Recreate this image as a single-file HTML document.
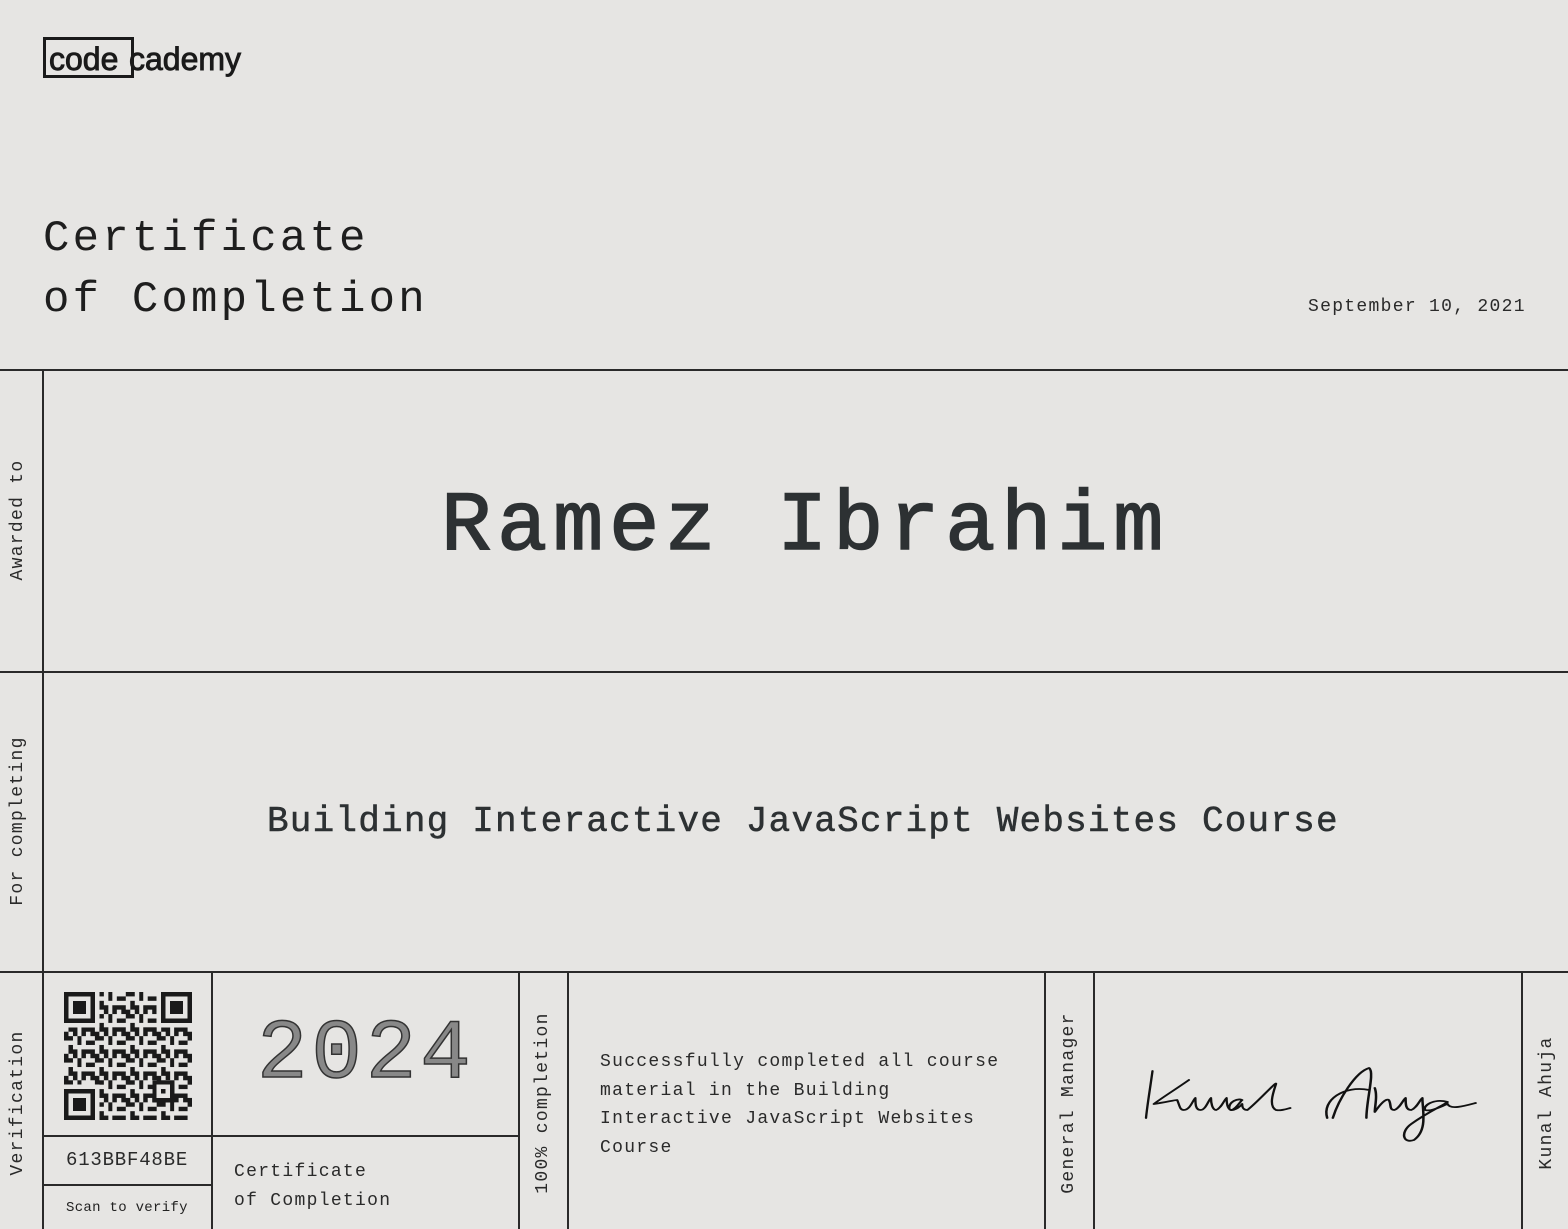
<!DOCTYPE html>
<html><head><meta charset="utf-8">
<style>
*{margin:0;padding:0;box-sizing:border-box}
html,body{width:1568px;height:1229px;overflow:hidden;background:#e6e5e3}
body{position:relative;font-family:"Liberation Mono",monospace;color:#222}
.a{position:absolute;white-space:nowrap}
.h{position:absolute;height:1.5px;background:#2a2a2a}
.v{position:absolute;width:1.5px;background:#2a2a2a}
.rot{position:absolute;white-space:nowrap;font-size:18px;letter-spacing:1.3px;color:#2a2a2a;transform:translate(-50%,-50%) rotate(-90deg)}
.s{font-size:18px;letter-spacing:1.3px;color:#2a2a2a}
</style></head><body>
<!-- logo -->
<div class="a" style="left:43px;top:37px;width:91px;height:41px;border:3px solid #1a1a1a"></div>
<div class="a" style="left:49px;top:41px;font-family:'Liberation Sans',sans-serif;font-size:32px;color:#1a1a1a;-webkit-text-stroke:0.9px #1a1a1a">code</div>
<div class="a" style="left:129px;top:41px;font-family:'Liberation Sans',sans-serif;font-size:32px;color:#1a1a1a;-webkit-text-stroke:0.9px #1a1a1a">cademy</div>

<div class="a" style="left:43px;top:209px;font-size:44px;letter-spacing:3.2px;line-height:61px;color:#1e1e1e">Certificate<br>of Completion</div>
<div class="a s" style="left:1308px;top:297px">September 10, 2021</div>

<!-- lines -->
<div class="h" style="left:0;top:369px;width:1568px"></div>
<div class="h" style="left:0;top:671px;width:1568px"></div>
<div class="h" style="left:0;top:971px;width:1568px"></div>
<div class="v" style="left:42px;top:369px;height:860px"></div>
<div class="v" style="left:211px;top:971px;height:258px"></div>
<div class="v" style="left:518px;top:971px;height:258px"></div>
<div class="v" style="left:567px;top:971px;height:258px"></div>
<div class="v" style="left:1044px;top:971px;height:258px"></div>
<div class="v" style="left:1093px;top:971px;height:258px"></div>
<div class="v" style="left:1521px;top:971px;height:258px"></div>
<div class="h" style="left:42px;top:1135px;width:477px"></div>
<div class="h" style="left:42px;top:1184px;width:170px"></div>

<div class="rot" style="left:18px;top:520px">Awarded to</div>
<div class="rot" style="left:18px;top:821px">For completing</div>
<div class="rot" style="left:18px;top:1103px">Verification</div>
<div class="rot" style="left:543px;top:1103px">100% completion</div>
<div class="rot" style="left:1069px;top:1103px">General Manager</div>
<div class="rot" style="left:1547px;top:1103px">Kunal Ahuja</div>

<div class="a" style="left:441px;top:480px;font-size:84px;letter-spacing:5.6px;color:#2d3133;-webkit-text-stroke:1.5px #2d3133">Ramez Ibrahim</div>
<div class="a" style="left:267px;top:801px;font-size:36px;letter-spacing:1.2px;color:#2d3133;-webkit-text-stroke:0.5px #2d3133">Building Interactive JavaScript Websites Course</div>

<!-- QR -->
<svg class="a" style="left:64px;top:992px" width="128" height="128" viewBox="0 0 29 29" shape-rendering="crispEdges">
<defs><pattern id="p" width="7" height="5" patternUnits="userSpaceOnUse">
<rect x="0" y="0" width="2" height="1" fill="#1a1a1a"/><rect x="3" y="0" width="1" height="2" fill="#1a1a1a"/><rect x="5" y="1" width="2" height="1" fill="#1a1a1a"/><rect x="1" y="2" width="1" height="2" fill="#1a1a1a"/><rect x="4" y="3" width="2" height="1" fill="#1a1a1a"/><rect x="0" y="4" width="1" height="1" fill="#1a1a1a"/><rect x="2" y="3" width="1" height="2" fill="#1a1a1a"/><rect x="6" y="3" width="1" height="2" fill="#1a1a1a"/><rect x="4" y="4" width="1" height="1" fill="#1a1a1a"/>
</pattern></defs>
<rect width="29" height="29" fill="url(#p)"/>
<rect x="0" y="0" width="8" height="8" fill="#e6e5e3"/><rect x="21" y="0" width="8" height="8" fill="#e6e5e3"/><rect x="0" y="21" width="8" height="8" fill="#e6e5e3"/>
<g fill="#1a1a1a">
<path d="M0 0h7v7h-7zM1 1v5h5v-5zM2 2h3v3h-3z" fill-rule="evenodd"/>
<path d="M22 0h7v7h-7zM23 1v5h5v-5zM24 2h3v3h-3z" fill-rule="evenodd"/>
<path d="M0 22h7v7h-7zM1 23v5h5v-5zM2 24h3v3h-3z" fill-rule="evenodd"/>
<rect x="20" y="20" width="5" height="5"/></g>
<rect x="21" y="21" width="3" height="3" fill="#e6e5e3"/><rect x="22" y="22" width="1" height="1" fill="#1a1a1a"/>
</svg>

<div class="a" style="left:257px;top:1008px;font-size:84px;letter-spacing:4px;color:#888;-webkit-text-stroke:1.5px #333">2024</div>
<div class="a s" style="left:66px;top:1149px;font-size:19px;letter-spacing:0.8px">613BBF48BE</div>
<div class="a" style="left:66px;top:1200px;font-size:14px;letter-spacing:0.3px">Scan to verify</div>
<div class="a s" style="left:234px;top:1158px;line-height:29px">Certificate<br>of Completion</div>
<div class="a s" style="left:600px;top:1048px;line-height:28.5px">Successfully completed all course<br>material in the Building<br>Interactive JavaScript Websites<br>Course</div>

<!-- signature -->
<svg class="a" style="left:1100px;top:1040px" width="400" height="110" viewBox="0 0 400 110" fill="none" stroke="#111" stroke-width="1.8" stroke-linecap="round" stroke-linejoin="round">
<g transform="translate(46,0) scale(1.3,1) translate(-46,0)">
<path d="M51 31 C49 50 47 65 46 78"/>
<path d="M79 40 C68 50 58 58 52 64 C62 62 68 60 70 60 C72 66 72 70 75 70 C80 70 82 60 84 58 C84 64 84 70 88 70 C92 70 94 60 96 58 C96 63 97 70 100 70 C104 68 106 60 108 58 C108 64 109 70 112 70 C116 68 118 62 120 60 C116 58 110 62 110 68 C110 72 116 70 120 64 C120 68 121 70 124 70 C132 62 147 40 146 44 C144 52 140 66 146 70 C150 71 154 69 157 68"/>
</g>
<g transform="translate(230,0) scale(1.4,1) translate(-230,0)">
<path d="M232 78 C236 60 248 32 258 28 C262 32 256 60 256 78 M228 78 C224 60 240 45 258 50"/>
<path d="M262 48 C264 56 262 66 262 72 C266 64 270 58 272 60 C274 64 272 70 276 70 C280 68 282 60 284 58 C284 64 284 70 288 70 C292 68 294 60 296 58 C296 70 300 90 290 100 C282 104 280 92 288 84 C300 72 310 66 314 62 C304 58 296 66 298 70 C302 72 310 66 314 64 C316 70 326 66 334 63"/>
</g>
</svg>
</body></html>
